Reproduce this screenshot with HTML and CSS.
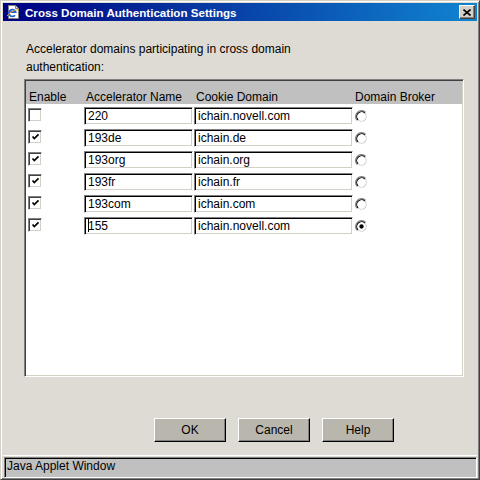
FILE: index.html
```html
<!DOCTYPE html>
<html lang="en">
<head>
    <meta charset="UTF-8">
    <title>Cross Domain Authentication Settings</title>
    <link rel="stylesheet" href="styles.css">
</head>
<body>
<div class="window">
    <div class="titlebar">
        <svg class="app-icon" width="16" height="16" viewBox="0 0 16 16">
            <path d="M3.5 1.5h7l3 3v10h-10z" fill="#fff" stroke="#808080"/>
            <path d="M10.5 1.5v3h3" fill="#d4d0c8" stroke="#808080"/>
            <path d="M10 11.2a3.4 3.4 0 1 1 0.6-3.2h-5.2" fill="none" stroke="#1f5fd6" stroke-width="1.8"/>
            <path d="M2 12c3-4 9-7 12-6" fill="none" stroke="#e8a030" stroke-width="1"/>
        </svg>
        <span class="title">Cross Domain Authentication Settings</span>
        <span class="close-btn">
            <svg width="8" height="7" viewBox="0 0 8 7">
                <path d="M0.5 0.5L7.5 6.5M7.5 0.5L0.5 6.5" stroke="#000" stroke-width="1.6"/>
            </svg>
        </span>
    </div>

    <div class="content">
        <p class="intro">Accelerator domains participating in cross domain<br>authentication:</p>

        <div class="table-panel">
            <div class="table-head">
                <span>Enable</span>
                <span>Accelerator Name</span>
                <span>Cookie Domain</span>
                <span class="last">Domain Broker</span>
            </div>
            <div class="table-body">
                <div class="row">
                    <span class="check"></span>
                    <span class="field name">220</span>
                    <span class="field domain">ichain.novell.com</span>
                    <svg class="radio" width="13" height="13" viewBox="0 0 12 12"><circle cx="6" cy="6" r="5" fill="#fff"/><path d="M2.11 9.89A5.5 5.5 0 0 1 9.89 2.11" fill="none" stroke="#808080"/><path d="M2.82 9.18A4.5 4.5 0 0 1 9.18 2.82" fill="none" stroke="#000"/><path d="M9.89 2.11A5.5 5.5 0 0 1 2.11 9.89" fill="none" stroke="#fff"/><path d="M9.18 2.82A4.5 4.5 0 0 1 2.82 9.18" fill="none" stroke="#d4d0c8"/></svg>
                </div>
                <div class="row">
                    <span class="check on"><svg width="9" height="9" viewBox="0 0 9 9"><path d="M1.5 3.5L3.3 5.5L7.5 1.3" fill="none" stroke="#000" stroke-width="1.7"/></svg></span>
                    <span class="field name">193de</span>
                    <span class="field domain">ichain.de</span>
                    <svg class="radio" width="13" height="13" viewBox="0 0 12 12"><circle cx="6" cy="6" r="5" fill="#fff"/><path d="M2.11 9.89A5.5 5.5 0 0 1 9.89 2.11" fill="none" stroke="#808080"/><path d="M2.82 9.18A4.5 4.5 0 0 1 9.18 2.82" fill="none" stroke="#000"/><path d="M9.89 2.11A5.5 5.5 0 0 1 2.11 9.89" fill="none" stroke="#fff"/><path d="M9.18 2.82A4.5 4.5 0 0 1 2.82 9.18" fill="none" stroke="#d4d0c8"/></svg>
                </div>
                <div class="row">
                    <span class="check on"><svg width="9" height="9" viewBox="0 0 9 9"><path d="M1.5 3.5L3.3 5.5L7.5 1.3" fill="none" stroke="#000" stroke-width="1.7"/></svg></span>
                    <span class="field name">193org</span>
                    <span class="field domain">ichain.org</span>
                    <svg class="radio" width="13" height="13" viewBox="0 0 12 12"><circle cx="6" cy="6" r="5" fill="#fff"/><path d="M2.11 9.89A5.5 5.5 0 0 1 9.89 2.11" fill="none" stroke="#808080"/><path d="M2.82 9.18A4.5 4.5 0 0 1 9.18 2.82" fill="none" stroke="#000"/><path d="M9.89 2.11A5.5 5.5 0 0 1 2.11 9.89" fill="none" stroke="#fff"/><path d="M9.18 2.82A4.5 4.5 0 0 1 2.82 9.18" fill="none" stroke="#d4d0c8"/></svg>
                </div>
                <div class="row">
                    <span class="check on"><svg width="9" height="9" viewBox="0 0 9 9"><path d="M1.5 3.5L3.3 5.5L7.5 1.3" fill="none" stroke="#000" stroke-width="1.7"/></svg></span>
                    <span class="field name">193fr</span>
                    <span class="field domain">ichain.fr</span>
                    <svg class="radio" width="13" height="13" viewBox="0 0 12 12"><circle cx="6" cy="6" r="5" fill="#fff"/><path d="M2.11 9.89A5.5 5.5 0 0 1 9.89 2.11" fill="none" stroke="#808080"/><path d="M2.82 9.18A4.5 4.5 0 0 1 9.18 2.82" fill="none" stroke="#000"/><path d="M9.89 2.11A5.5 5.5 0 0 1 2.11 9.89" fill="none" stroke="#fff"/><path d="M9.18 2.82A4.5 4.5 0 0 1 2.82 9.18" fill="none" stroke="#d4d0c8"/></svg>
                </div>
                <div class="row">
                    <span class="check on"><svg width="9" height="9" viewBox="0 0 9 9"><path d="M1.5 3.5L3.3 5.5L7.5 1.3" fill="none" stroke="#000" stroke-width="1.7"/></svg></span>
                    <span class="field name">193com</span>
                    <span class="field domain">ichain.com</span>
                    <svg class="radio" width="13" height="13" viewBox="0 0 12 12"><circle cx="6" cy="6" r="5" fill="#fff"/><path d="M2.11 9.89A5.5 5.5 0 0 1 9.89 2.11" fill="none" stroke="#808080"/><path d="M2.82 9.18A4.5 4.5 0 0 1 9.18 2.82" fill="none" stroke="#000"/><path d="M9.89 2.11A5.5 5.5 0 0 1 2.11 9.89" fill="none" stroke="#fff"/><path d="M9.18 2.82A4.5 4.5 0 0 1 2.82 9.18" fill="none" stroke="#d4d0c8"/></svg>
                </div>
                <div class="row">
                    <span class="check on"><svg width="9" height="9" viewBox="0 0 9 9"><path d="M1.5 3.5L3.3 5.5L7.5 1.3" fill="none" stroke="#000" stroke-width="1.7"/></svg></span>
                    <span class="field name"><span class="caret"></span>155</span>
                    <span class="field domain">ichain.novell.com</span>
                    <svg class="radio" width="13" height="13" viewBox="0 0 12 12"><circle cx="6" cy="6" r="5" fill="#fff"/><path d="M2.11 9.89A5.5 5.5 0 0 1 9.89 2.11" fill="none" stroke="#808080"/><path d="M2.82 9.18A4.5 4.5 0 0 1 9.18 2.82" fill="none" stroke="#000"/><path d="M9.89 2.11A5.5 5.5 0 0 1 2.11 9.89" fill="none" stroke="#fff"/><path d="M9.18 2.82A4.5 4.5 0 0 1 2.82 9.18" fill="none" stroke="#d4d0c8"/><circle cx="6" cy="6" r="2" fill="#000"/></svg>
                </div>
            </div>
        </div>

        <div class="buttons">
            <span class="btn">OK</span>
            <span class="btn">Cancel</span>
            <span class="btn">Help</span>
        </div>
    </div>

    <div class="statusbar">Java Applet Window</div>
</div>
</body>
</html>
```

FILE: styles.css
```css
body {
    margin: 0;
    padding: 0;
    font-family: "Liberation Sans", Arial, sans-serif;
    font-size: 12px;
    color: #000;
}

.window {
    width: 480px;
    height: 480px;
    box-sizing: border-box;
    background-color: #dedbd4;
    border: 1px solid;
    border-color: #d4d0c8 #404040 #404040 #d4d0c8;
    box-shadow: inset 1px 1px #fff, inset -1px -1px #808080;
    padding: 2px 2px 1px 2px;
    display: flex;
    flex-direction: column;
}

.titlebar {
    height: 18px;
    flex-shrink: 0;
    display: flex;
    align-items: center;
    background: linear-gradient(to right, #000080, #1084d0);
    color: #fff;
    padding: 0 2px;
}
.app-icon {
    margin-right: 4px;
}
.title {
    flex: 1;
    font-weight: bold;
    font-size: 11.6px;
    padding-top: 1px;
}
.close-btn {
    width: 16px;
    height: 14px;
    box-sizing: border-box;
    background-color: #d4d0c8;
    border: 1px solid;
    border-color: #fff #404040 #404040 #fff;
    box-shadow: inset -1px -1px #808080;
    display: flex;
    align-items: center;
    justify-content: center;
}

.content {
    flex: 1;
    padding-top: 19px;
    border-bottom: 1px solid #fff;
}
.intro {
    margin: 0 0 0 23px;
    line-height: 18px;
}

.table-panel {
    margin: 3px 0 0 21px;
    width: 440px;
    height: 298px;
    box-sizing: border-box;
    background-color: #fff;
    border: 1px solid;
    border-color: #808080 #fff #fff #808080;
    box-shadow: inset 1px 1px #404040, inset -1px -1px #d4d0c8;
    padding: 1px;
}
.table-head {
    height: 23px;
    box-sizing: border-box;
    background-color: #c0c0c0;
    display: grid;
    grid-template-columns: 56px 110px 160px 1fr;
    padding: 9px 0 0 3px;
    line-height: 14px;
}
.table-head span {
    padding-left: 1px;
}
.table-head span:first-child,
.table-head .last {
    padding-left: 0;
}

.table-body {
    padding: 3px 0 0 2px;
    display: flex;
    flex-direction: column;
    gap: 4px;
}
.row {
    display: grid;
    grid-template-columns: 56px 110px 160px 1fr;
    height: 18px;
    align-items: start;
}

.check {
    width: 14px;
    height: 14px;
    margin-top: 1px;
    box-sizing: border-box;
    background-color: #fff;
    border: 1px solid;
    border-color: #808080 #fff #fff #808080;
    box-shadow: inset 1px 1px #404040, inset -1px -1px #d4d0c8;
    display: flex;
    align-items: center;
    justify-content: center;
}

.field {
    height: 18px;
    box-sizing: border-box;
    background-color: #fff;
    border: 1px solid;
    border-color: #808080 #fff #fff #808080;
    box-shadow: inset 1px 1px #000, inset -1px -1px #d4d0c8;
    padding: 1px 2px 0 3px;
    line-height: 15px;
    white-space: nowrap;
    overflow: hidden;
}
.field.name {
    width: 109px;
}
.field.domain {
    width: 159px;
}
.caret {
    display: inline-block;
    width: 1px;
    height: 13px;
    background-color: #000;
    vertical-align: -2px;
    margin-right: -1px;
}

.radio {
    margin: 3px 0 0 1px;
}

.buttons {
    display: flex;
    gap: 12px;
    margin: 41px 0 0 151px;
}
.btn {
    width: 72px;
    height: 24px;
    box-sizing: border-box;
    background-color: #b9b6ad;
    border: 1px solid;
    border-color: #fff #000 #000 #fff;
    box-shadow: inset -1px -1px #808080;
    text-align: center;
    line-height: 22px;
}

.statusbar {
    flex-shrink: 0;
    height: 21px;
    box-sizing: border-box;
    margin: 1px 0 0 1px;
    background-color: #c0c0c0;
    border: 1px solid;
    border-color: #808080 #fff #fff #808080;
    box-shadow: inset 1px 1px #000;
    padding-left: 2px;
    line-height: 17px;
}
```
